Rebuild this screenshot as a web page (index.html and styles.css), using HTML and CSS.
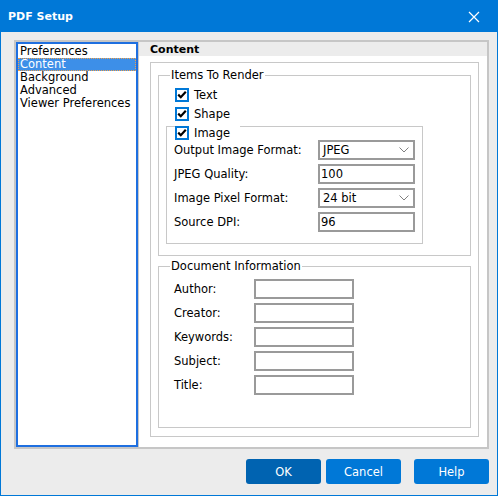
FILE: index.html
```html
<!DOCTYPE html>
<html lang="en">
<head>
    <meta charset="UTF-8">
    <title>PDF Setup</title>
    <link rel="stylesheet" href="styles.css">
</head>
<body>
    <div class="window">
        <div class="titlebar">
            <span class="title">PDF Setup</span>
            <svg class="close" width="12" height="12" viewBox="0 0 12 12">
                <path d="M1 1 L11 11 M11 1 L1 11" stroke="#fff" stroke-width="1.2" fill="none"/>
            </svg>
        </div>

        <div class="client">
            <div class="frame">
                <ul class="page-list">
                    <li>Preferences</li>
                    <li class="selected">Content</li>
                    <li>Background</li>
                    <li>Advanced</li>
                    <li>Viewer Preferences</li>
                </ul>

                <div class="page">
                    <div class="page-title">Content</div>
                    <div class="page-body">
                        <div class="outer-box">
                            <fieldset class="group items">
                                <legend>Items To Render</legend>
                                <div class="check-row"><span class="checkbox"></span>Text</div>
                                <div class="check-row"><span class="checkbox"></span>Shape</div>

                                <div class="image-group">
                                    <div class="image-head"><span class="checkbox"></span>Image</div>
                                    <div class="field-row">
                                        <span class="label wide">Output Image Format:</span>
                                        <div class="field combo">JPEG<span class="chevron"></span></div>
                                    </div>
                                    <div class="field-row">
                                        <span class="label wide">JPEG Quality:</span>
                                        <div class="field">100</div>
                                    </div>
                                    <div class="field-row">
                                        <span class="label wide">Image Pixel Format:</span>
                                        <div class="field combo">24 bit<span class="chevron"></span></div>
                                    </div>
                                    <div class="field-row">
                                        <span class="label wide">Source DPI:</span>
                                        <div class="field">96</div>
                                    </div>
                                </div>
                            </fieldset>

                            <fieldset class="group docinfo">
                                <legend>Document Information</legend>
                                <div class="field-row"><span class="label">Author:</span><div class="field doc"></div></div>
                                <div class="field-row"><span class="label">Creator:</span><div class="field doc"></div></div>
                                <div class="field-row"><span class="label">Keywords:</span><div class="field doc"></div></div>
                                <div class="field-row"><span class="label">Subject:</span><div class="field doc"></div></div>
                                <div class="field-row"><span class="label">Title:</span><div class="field doc"></div></div>
                            </fieldset>
                        </div>
                    </div>
                </div>
            </div>

            <div class="buttons">
                <button class="btn default">OK</button>
                <button class="btn">Cancel</button>
                <button class="btn help">Help</button>
            </div>
        </div>
    </div>
</body>
</html>
```

FILE: styles.css
```css
body {
    margin: 0;
    font-family: "DejaVu Sans", Verdana, sans-serif;
    font-size: 11.5px;
    color: #000;
}

.window {
    width: 498px;
    height: 496px;
    box-sizing: border-box;
    border: 1px solid #0078d7;
    background-color: #ececec;
    display: flex;
    flex-direction: column;
}

.titlebar {
    height: 31px;
    background-color: #0078d7;
    color: #fff;
    display: flex;
    align-items: center;
    justify-content: space-between;
    padding: 0 17px 0 7px;
}

.title {
    font-weight: bold;
    font-size: 11px;
}

.close {
    margin-top: 1px;
}

.client {
    flex: 1;
    padding: 8px 8px 0 13px;
    display: flex;
    flex-direction: column;
}

.frame {
    height: 409px;
    box-sizing: border-box;
    border: 2px solid #c6c6c6;
    display: flex;
}

/* page list on the left */
.page-list {
    width: 122px;
    box-sizing: border-box;
    margin: 0;
    padding: 1px 0 0 0;
    list-style: none;
    background-color: #fff;
    border: 2px solid #1e6fe0;
}

.page-list li {
    height: 13px;
    line-height: 13px;
    padding-left: 2px;
    white-space: nowrap;
    box-sizing: border-box;
}

.page-list li.selected {
    background-color: #3d8fe8;
    color: #fff;
    border: 1px dotted #f0a04b;
    padding-left: 1px;
    line-height: 11px;
}

/* right page */
.page {
    flex: 1;
    border-left: 1px solid #c8c8c8;
    display: flex;
    flex-direction: column;
}

.page-title {
    height: 14px;
    line-height: 15px;
    padding-left: 11px;
    font-weight: bold;
    font-size: 11px;
    background-color: #ececec;
}

.page-body {
    flex: 1;
    background-color: #fff;
    padding: 6px 8px 10px 11px;
    display: flex;
}

.outer-box {
    flex: 1;
    border: 1px solid #c8c8c8;
    padding: 5px 7px 0 7px;
}

.group {
    margin: 0;
    padding: 0;
    border: 1px solid #c8c8c8;
}

.group legend {
    padding: 0 1px;
    line-height: 14px;
}

.items {
    padding: 3px 0 11px 16px;
}

.items legend {
    margin-left: -5px;
}

.check-row {
    height: 19px;
    display: flex;
    align-items: center;
}

.checkbox {
    width: 14px;
    height: 14px;
    box-sizing: border-box;
    border: 2px solid #0078d7;
    background: #fff url("data:image/svg+xml,%3Csvg xmlns='http://www.w3.org/2000/svg' width='10' height='10' viewBox='0 0 10 10'%3E%3Cpath d='M1.2 4.6 L3.8 7.2 L8.8 1.8' stroke='%23000' stroke-width='2.2' fill='none'/%3E%3C/svg%3E") center no-repeat;
    margin-right: 5px;
}

.image-group {
    margin: 3px 0 0 -9px;
    width: 257px;
    box-sizing: border-box;
    border: 1px solid #c8c8c8;
    padding: 0 0 11px 7px;
    display: flex;
    flex-direction: column;
    gap: 4px;
}

.image-head {
    align-self: flex-start;
    height: 14px;
    margin: -1px 0 -4px 1px;
    padding-right: 10px;
    background-color: #fff;
    display: flex;
    align-items: center;
}

.field-row {
    height: 20px;
    display: flex;
    align-items: center;
}

.label {
    width: 80px;
}

.label.wide {
    width: 144px;
}

.field {
    width: 97px;
    height: 20px;
    box-sizing: border-box;
    border: 2px solid #9a9a9a;
    padding: 0 1px;
    line-height: 16px;
    background-color: #fff;
    display: flex;
    align-items: center;
    justify-content: space-between;
}

.field.combo {
    padding: 0 4px 0 3px;
}

.field.doc {
    width: 100px;
}

.chevron {
    width: 10px;
    height: 6px;
    background: url("data:image/svg+xml,%3Csvg xmlns='http://www.w3.org/2000/svg' width='10' height='6' viewBox='0 0 10 6'%3E%3Cpath d='M0.5 0.5 L5 5 L9.5 0.5' stroke='%23808080' stroke-width='1' fill='none'/%3E%3C/svg%3E") no-repeat;
}

.docinfo {
    margin-top: 3px;
    height: 169px;
    box-sizing: border-box;
    padding: 6px 0 0 15px;
}

.docinfo legend {
    margin-left: -4px;
}

.docinfo .field-row {
    margin-bottom: 4px;
}

/* bottom buttons */
.buttons {
    margin-top: 10px;
    display: flex;
    justify-content: flex-end;
    gap: 5px;
}

.btn {
    width: 75px;
    height: 25px;
    border: none;
    border-radius: 3px;
    background-color: #0078d7;
    color: #fff;
    font-family: "DejaVu Sans", Verdana, sans-serif;
    font-size: 11.5px;
    padding: 0;
}

.btn.default {
    background-color: #0063b1;
}

.btn.help {
    margin-left: 8px;
}
```
